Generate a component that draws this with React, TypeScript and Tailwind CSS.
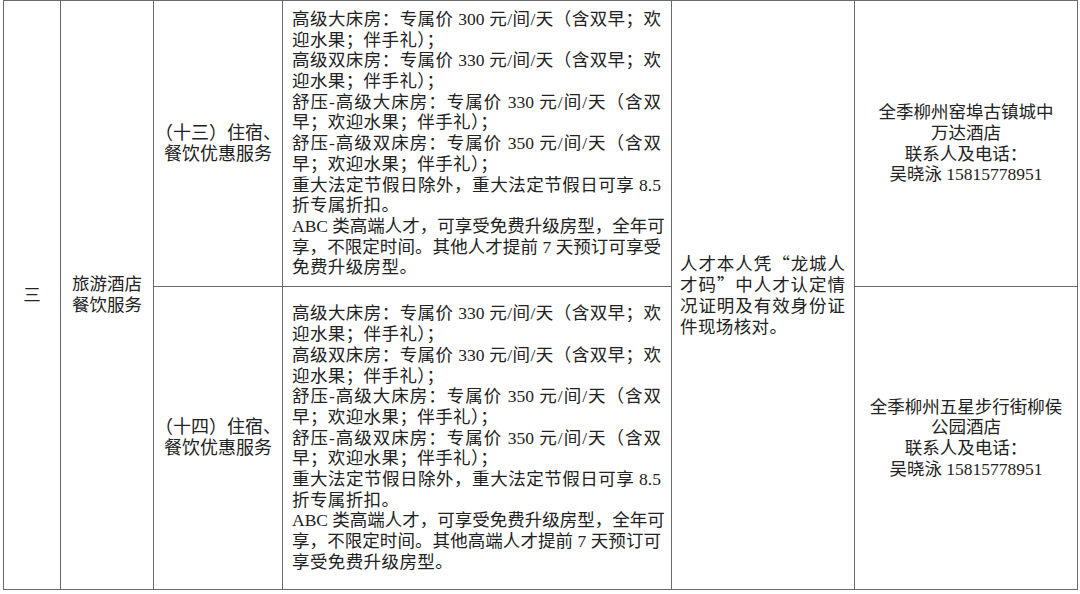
import React from "react";

// one entry per printed line; `full` lines are stretched edge to edge
type Line = { text: React.ReactNode; full?: boolean };

const offerA: Line[] = [
  { text: "高级大床房：专属价 300 元/间/天（含双早；欢", full: true },
  { text: "迎水果；伴手礼）；" },
  { text: "高级双床房：专属价 330 元/间/天（含双早；欢", full: true },
  { text: "迎水果；伴手礼）；" },
  { text: "舒压-高级大床房：专属价 330 元/间/天（含双", full: true },
  { text: "早；欢迎水果；伴手礼）；" },
  { text: "舒压-高级双床房：专属价 350 元/间/天（含双", full: true },
  { text: "早；欢迎水果；伴手礼）；" },
  { text: "重大法定节假日除外，重大法定节假日可享 8.5", full: true },
  { text: "折专属折扣。" },
  { text: "ABC 类高端人才，可享受免费升级房型，全年可", full: true },
  { text: "享，不限定时间。其他人才提前 7 天预订可享受", full: true },
  { text: "免费升级房型。" },
];

const offerB: Line[] = [
  { text: "高级大床房：专属价 330 元/间/天（含双早；欢", full: true },
  { text: "迎水果；伴手礼）；" },
  { text: "高级双床房：专属价 330 元/间/天（含双早；欢", full: true },
  { text: "迎水果；伴手礼）；" },
  { text: "舒压-高级大床房：专属价 350 元/间/天（含双", full: true },
  { text: "早；欢迎水果；伴手礼）；" },
  { text: "舒压-高级双床房：专属价 350 元/间/天（含双", full: true },
  { text: "早；欢迎水果；伴手礼）；" },
  { text: "重大法定节假日除外，重大法定节假日可享 8.5", full: true },
  { text: "折专属折扣。" },
  { text: "ABC 类高端人才，可享受免费升级房型，全年可", full: true },
  { text: "享，不限定时间。其他高端人才提前 7 天预订可", full: true },
  { text: "享受免费升级房型。" },
];

const Q = ({ c }: { c: string }) => (
  <span className="font-[family-name:'Noto_Sans_CJK_SC',sans-serif]">{c}</span>
);

const verify: Line[] = [
  { text: <>人才本人凭<Q c="“" />龙城人</>, full: true },
  { text: <>才码<Q c="”" />中人才认定情</>, full: true },
  { text: "况证明及有效身份证", full: true },
  { text: "件现场核对。" },
];

function Lines({ lines }: { lines: Line[] }) {
  return (
    <div className="w-full">
      {lines.map((l, i) => (
        <div
          key={i}
          className={
            l.full
              ? "whitespace-nowrap text-justify [text-align-last:justify]"
              : "whitespace-nowrap text-left tracking-[0.4px]"
          }
        >
          {l.text}
        </div>
      ))}
    </div>
  );
}

function Centered({ lines }: { lines: string[] }) {
  return (
    <div className="text-center">
      {lines.map((t, i) => (
        <div key={i} className="whitespace-nowrap">{t}</div>
      ))}
    </div>
  );
}

const cell = "bg-white flex items-center";

export default function App() {
  return (
    <div className="min-h-[594px] bg-white text-[#222] text-[17.5px] leading-[20.7px] font-[family-name:'Liberation_Serif','Noto_Sans_CJK_SC',serif]">
      <div className="ml-[3px] inline-grid gap-px p-px bg-[#6a6a6a] grid-cols-[56px_92px_128px_388px_182px_222px] grid-rows-[285px_302px]">
        {/* row 1 */}
        <div className={`${cell} row-span-2 justify-center`}>三</div>
        <div className={`${cell} row-span-2 justify-center`}>
          <Centered lines={["旅游酒店", "餐饮服务"]} />
        </div>
        <div className={`${cell} justify-center text-[18px]`}>
          <Centered lines={["（十三）住宿、", "餐饮优惠服务"]} />
        </div>
        <div className={`${cell} pl-[9px] pr-[10px]`}>
          <Lines lines={offerA} />
        </div>
        <div className={`${cell} row-span-2 pl-[8px] pr-[9px]`}>
          <Lines lines={verify} />
        </div>
        <div className={`${cell} justify-center`}>
          <Centered lines={["全季柳州窑埠古镇城中", "万达酒店", "联系人及电话：", "吴晓泳 15815778951"]} />
        </div>

        {/* row 2 */}
        <div className={`${cell} justify-center text-[18px]`}>
          <Centered lines={["（十四）住宿、", "餐饮优惠服务"]} />
        </div>
        <div className={`${cell} pl-[9px] pr-[10px]`}>
          <Lines lines={offerB} />
        </div>
        <div className={`${cell} justify-center`}>
          <Centered lines={["全季柳州五星步行街柳侯", "公园酒店", "联系人及电话：", "吴晓泳 15815778951"]} />
        </div>
      </div>
    </div>
  );
}
